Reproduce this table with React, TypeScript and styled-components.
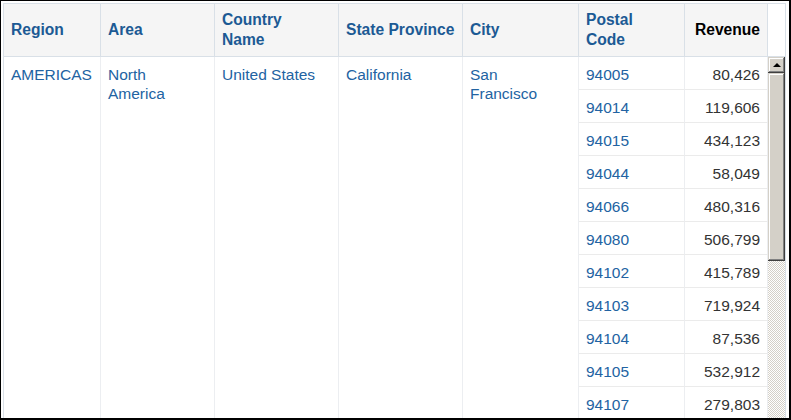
import React from 'react';
import styled, { createGlobalStyle } from 'styled-components';

const GlobalStyle = createGlobalStyle`
  html, body {
    margin: 0;
    padding: 0;
    background: #fff;
  }
  body {
    font-family: 'Liberation Sans', Arial, sans-serif;
  }
`;

const COLS = '97px 114px 124px 124px 116px 106px 83px';

const Frame = styled.div`
  box-sizing: border-box;
  width: 791px;
  height: 420px;
  border: solid #000;
  border-width: 1px 2px 2px 1px;
  padding: 2px 3px 0 2px;
  background: #fff;
  overflow: hidden;
`;

const Table = styled.div`
  box-sizing: border-box;
  height: 100%;
  display: flex;
  flex-direction: column;
  border: 1px solid #d9e0e7;
  border-bottom: none;
  overflow: hidden;
`;

const Head = styled.div`
  display: grid;
  grid-template-columns: ${COLS} 17px;
  height: 53px;
  box-sizing: border-box;
  border-bottom: 1px solid #d9e0e7;
  flex-shrink: 0;
`;

const HeadCell = styled.div<{ $right?: boolean; $dark?: boolean }>`
  display: flex;
  align-items: center;
  justify-content: ${p => (p.$right ? 'flex-end' : 'flex-start')};
  box-sizing: border-box;
  padding: 0 7px;
  border-right: 1px solid #d9e0e7;
  background: #f5f5f5;
  color: ${p => (p.$dark ? '#000' : '#1c5a94')};
  font-size: 15.6px;
  font-weight: bold;
  line-height: 20px;
  white-space: nowrap;
`;

const Gutter = styled.div`
  background: #fff;
`;

const Body = styled.div`
  flex: 1;
  min-height: 0;
  display: flex;
  overflow: hidden;
`;

const Grid = styled.div`
  display: grid;
  grid-template-columns: ${COLS};
  grid-auto-rows: 33px;
  align-content: start;
`;

const SpanCell = styled.div<{ $col: number; $rows: number }>`
  grid-column: ${p => p.$col};
  grid-row: 1 / span ${p => p.$rows};
  box-sizing: border-box;
  padding: 8px 7px;
  border-right: 1px solid #eceef1;
  color: #2263a2;
  font-size: 15.5px;
  line-height: 19px;
  white-space: pre-line;
`;

const RowCell = styled.div<{ $col: number; $num?: boolean }>`
  grid-column: ${p => p.$col};
  box-sizing: border-box;
  padding: 8px 7px 0;
  border-right: 1px solid #eceef1;
  border-bottom: 1px solid #ebebeb;
  text-align: ${p => (p.$num ? 'right' : 'left')};
  color: ${p => (p.$num ? '#333' : '#2263a2')};
  font-size: 15.5px;
  line-height: 19px;
`;

const ScrollBar = styled.div`
  width: 17px;
  display: flex;
  flex-direction: column;
  flex-shrink: 0;
`;

const bevel = `
  background: #d4d0c8;
  box-shadow: inset -1px -1px #404040, inset 1px 1px #d4d0c8,
    inset -2px -2px #808080, inset 2px 2px #fff;
`;

const ArrowButton = styled.div`
  height: 16px;
  display: flex;
  align-items: center;
  justify-content: center;
  ${bevel}

  &::before {
    content: '';
    border-left: 4px solid transparent;
    border-right: 4px solid transparent;
    border-bottom: 4px solid #000;
    margin-top: -1px;
  }
`;

const Thumb = styled.div`
  height: 188px;
  ${bevel}
`;

const Track = styled.div`
  flex: 1;
  background: repeating-conic-gradient(#d4d0c8 0 25%, #fff 0 50%) 0 0 / 2px 2px;
`;

const headers = [
  { label: 'Region' },
  { label: 'Area' },
  { label: 'Country\nName' },
  { label: 'State Province' },
  { label: 'City' },
  { label: 'Postal\nCode' },
  { label: 'Revenue', right: true, dark: true },
];

const groups = ['AMERICAS', 'North\nAmerica', 'United States', 'California', 'San\nFrancisco'];

const rows: [string, string][] = [
  ['94005', '80,426'],
  ['94014', '119,606'],
  ['94015', '434,123'],
  ['94044', '58,049'],
  ['94066', '480,316'],
  ['94080', '506,799'],
  ['94102', '415,789'],
  ['94103', '719,924'],
  ['94104', '87,536'],
  ['94105', '532,912'],
  ['94107', '279,803'],
];

const HeadLabel: React.FC<{ text: string }> = ({ text }) => (
  <span>
    {text.split('\n').map((line, i) => (
      <React.Fragment key={i}>
        {i > 0 && <br />}
        {line}
      </React.Fragment>
    ))}
  </span>
);

export default function App() {
  return (
    <>
      <GlobalStyle />
      <Frame>
        <Table>
          <Head>
            {headers.map(h => (
              <HeadCell key={h.label} $right={h.right} $dark={h.dark}>
                <HeadLabel text={h.label} />
              </HeadCell>
            ))}
            <Gutter />
          </Head>
          <Body>
            <Grid>
              {groups.map((g, i) => (
                <SpanCell key={g} $col={i + 1} $rows={rows.length}>
                  {g}
                </SpanCell>
              ))}
              {rows.map(([code, rev]) => (
                <React.Fragment key={code}>
                  <RowCell $col={6}>{code}</RowCell>
                  <RowCell $col={7} $num>
                    {rev}
                  </RowCell>
                </React.Fragment>
              ))}
            </Grid>
            <ScrollBar>
              <ArrowButton />
              <Thumb />
              <Track />
            </ScrollBar>
          </Body>
        </Table>
      </Frame>
    </>
  );
}
